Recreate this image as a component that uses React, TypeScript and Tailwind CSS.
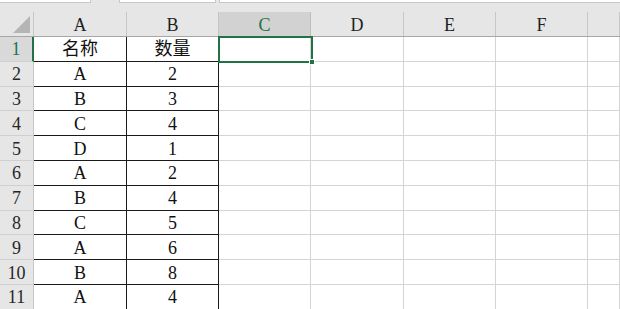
import React from "react";

const cols = ["A", "B", "C", "D", "E", "F", ""];
const data: [string, string][] = [
  ["名称", "数量"],
  ["A", "2"],
  ["B", "3"],
  ["C", "4"],
  ["D", "1"],
  ["A", "2"],
  ["B", "4"],
  ["C", "5"],
  ["A", "6"],
  ["B", "8"],
  ["A", "4"],
];

const gridCols = "grid grid-cols-[34px_93px_92px_92px_93px_92px_92px_32px]";

export default function App() {
  return (
    <div
      className="relative w-[620px] h-[309px] overflow-hidden bg-white text-[18px] leading-none"
      style={{ fontFamily: '"Liberation Serif", "Noto Sans CJK SC", serif' }}
    >
      {/* top strip */}
      <div className="h-[12px] bg-[#e6e6e6] flex items-start">
        <div className="w-[91px] h-[3px] bg-white border-r border-b border-[#c8c8c8]" />
        <div className="ml-[28px] w-[97px] h-[3px] bg-white border-x border-b border-[#c8c8c8]" />
        <div className="ml-[3px] flex-1 h-[3px] bg-white border-l border-b border-[#c8c8c8]" />
      </div>

      {/* column header row */}
      <div className={`${gridCols} h-[25px] bg-[#e6e6e6] border-b border-[#a6a6a6]`}>
        <div className="relative border-r border-[#c6c6c6]">
          <div className="absolute right-[3px] bottom-[3px] w-0 h-0 border-l-[17px] border-l-transparent border-b-[17px] border-b-[#b5b5b5]" />
        </div>
        {cols.map((c, idx) => (
          <div
            key={idx}
            className={
              c === "C"
                ? "flex items-center justify-center bg-[#d2d2d2] text-[#217346] border-r border-[#bdbdbd]"
                : "flex items-center justify-center text-[#1f1f1f] border-r border-[#c6c6c6]"
            }
          >
            <span className="mt-[1px]">{c}</span>
          </div>
        ))}
      </div>

      {/* rows */}
      {data.map((row, i) => (
        <div key={i} className={`${gridCols} h-[24.8px]`}>
          <div
            className={
              i === 0
                ? "flex items-center justify-center bg-[#d9d9d9] text-[#217346] border-r-2 border-r-[#217346] border-b border-b-[#d0d0d0]"
                : "flex items-center justify-center bg-[#e6e6e6] text-[#262626] border-r border-r-[#c6c6c6] border-b border-b-[#d0d0d0]"
            }
          >
            <span className="mt-[1px]">{i + 1}</span>
          </div>
          <div className="flex items-center justify-center text-[#111111] border-r border-b border-[#1a1a1a]">
            <span className="mt-[1px]">{row[0]}</span>
          </div>
          <div className="flex items-center justify-center text-[#111111] border-r border-b border-[#1a1a1a]">
            <span className="mt-[1px]">{row[1]}</span>
          </div>
          {[0, 1, 2, 3, 4].map((k) => (
            <div key={k} className="border-r border-b border-[#d4d4d4]" />
          ))}
        </div>
      ))}

      {/* selection box C1 */}
      <div className="absolute left-[218px] top-[36px] w-[95px] h-[27px] border-2 border-[#217346]" />
      <div className="absolute left-[309px] top-[59px] w-[6px] h-[6px] bg-[#217346] border border-white" />
    </div>
  );
}
